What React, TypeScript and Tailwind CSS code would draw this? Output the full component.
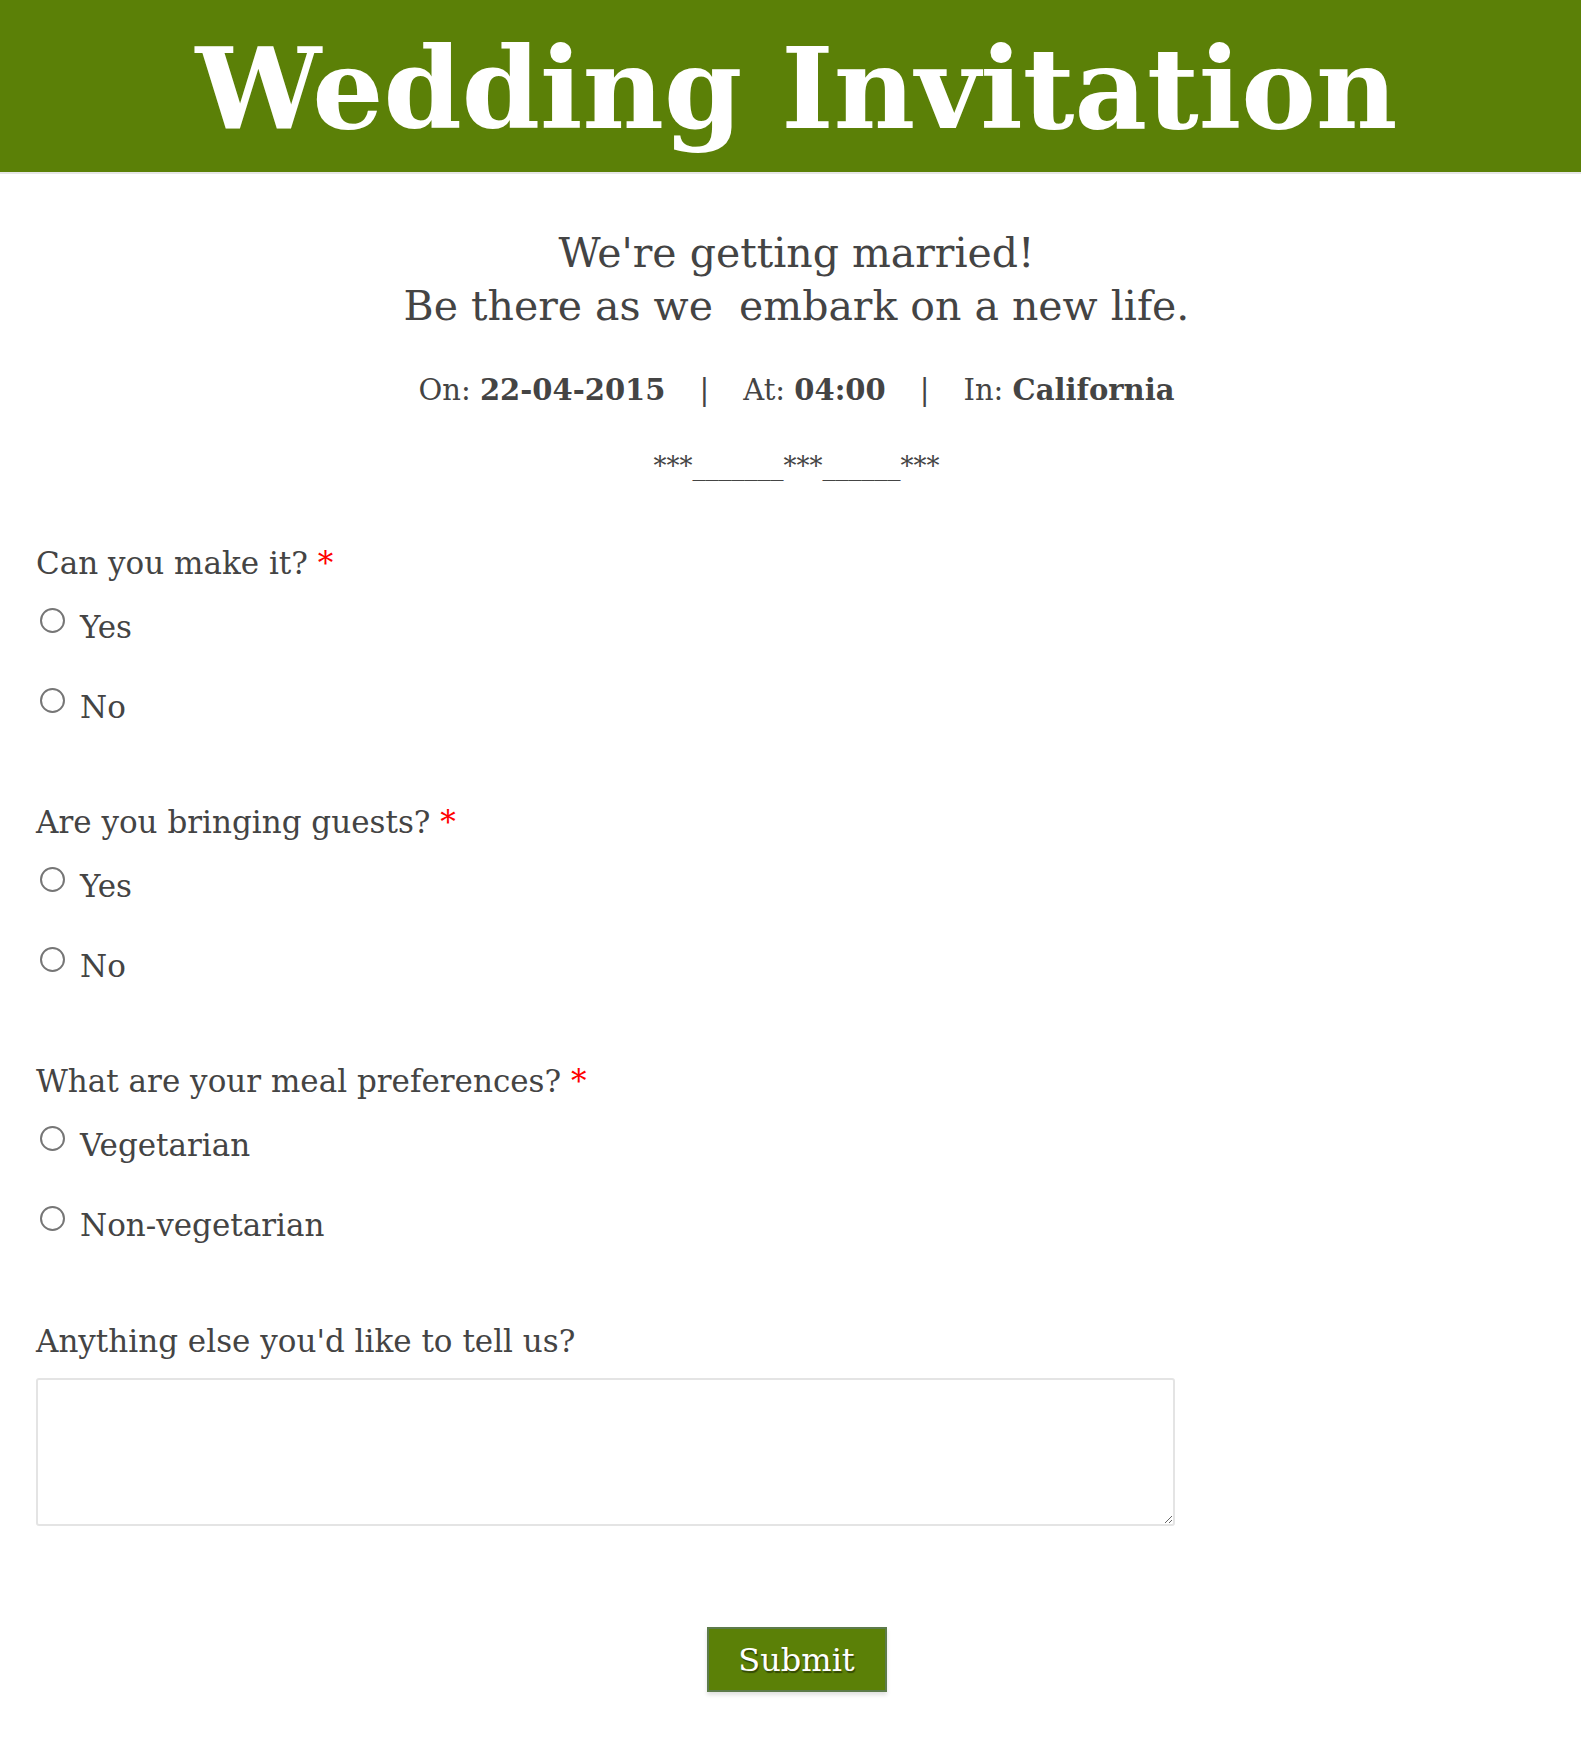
import type { ReactNode } from "react";

const serif = "font-['DejaVu_Serif',Georgia,serif]";

type Question = {
  label: string;
  name: string;
  options: string[];
};

const questions: Question[] = [
  { label: "Can you make it?", name: "attend", options: ["Yes", "No"] },
  { label: "Are you bringing guests?", name: "guests", options: ["Yes", "No"] },
  { label: "What are your meal preferences?", name: "meal", options: ["Vegetarian", "Non-vegetarian"] },
];

export default function App() {
  return (
    <div className={`${serif} min-h-[1738px] bg-white text-[#444]`}>
      <header className="h-[174px] bg-[#5b8007] border-b-2 border-[#e6e6e6] pl-[12px] pt-[33px] overflow-hidden">
        <h1 className="text-center text-[112px] leading-[112px] font-bold text-white whitespace-nowrap">
          Wedding Invitation
        </h1>
      </header>

      <section className="pl-[12px] text-center">
        <p className="mt-[53px] text-[41px] leading-[53px]">
          We're getting married!
          <br />
          Be there as we&nbsp; embark on a new life.
        </p>
        <div className="mt-[37px] flex justify-center items-center gap-[34px] text-[29px] leading-[40px]">
          <span>
            On: <b>22-04-2015</b>
          </span>
          <span>|</span>
          <span>
            At: <b>04:00</b>
          </span>
          <span>|</span>
          <span>
            In: <b>California</b>
          </span>
        </div>
        <p className="mt-[40px] text-[26px] leading-[32px]">***_______***______***</p>
      </section>

      <form className="px-[36px]" onSubmit={(e) => e.preventDefault()}>
        {questions.map((q, i) => (
          <fieldset key={q.name} className={i === 0 ? "mt-[61px]" : "mt-[75px]"}>
            <Label required>{q.label}</Label>
            <div className="mt-[24px] flex flex-col gap-[40px]">
              {q.options.map((opt) => (
                <label key={opt} className="flex items-start gap-[15px] text-[31px] leading-[40px]">
                  <input
                    type="radio"
                    name={q.name}
                    className="appearance-none ml-[4px] mt-[1px] w-[25px] h-[25px] shrink-0 rounded-full border-2 border-[#767676] bg-white checked:border-[7px] checked:border-[#5b8007]"
                  />
                  <span>{opt}</span>
                </label>
              ))}
            </div>
          </fieldset>
        ))}

        <div className="mt-[76px]">
          <Label>Anything else you'd like to tell us?</Label>
          <textarea className="mt-[17px] block w-[1139px] h-[148px] rounded-[3px] border-2 border-[#e4e4e4] bg-white outline-none" />
        </div>

        <div className="pl-[12px] mt-[101px] flex justify-center">
          <button
            type="submit"
            className="w-[180px] h-[65px] bg-[#5b8007] border-2 border-[#5d7b4b] text-white text-[32px] [text-shadow:1px_2px_1px_rgba(0,0,0,0.45)] shadow-[0_3px_4px_rgba(0,0,0,0.12)]"
          >
            Submit
          </button>
        </div>
      </form>
    </div>
  );
}

function Label({ children, required }: { children: ReactNode; required?: boolean }) {
  return (
    <div className="text-[31px] leading-[40px]">
      {children}
      {required && <span className="text-[#f00]"> *</span>}
    </div>
  );
}
